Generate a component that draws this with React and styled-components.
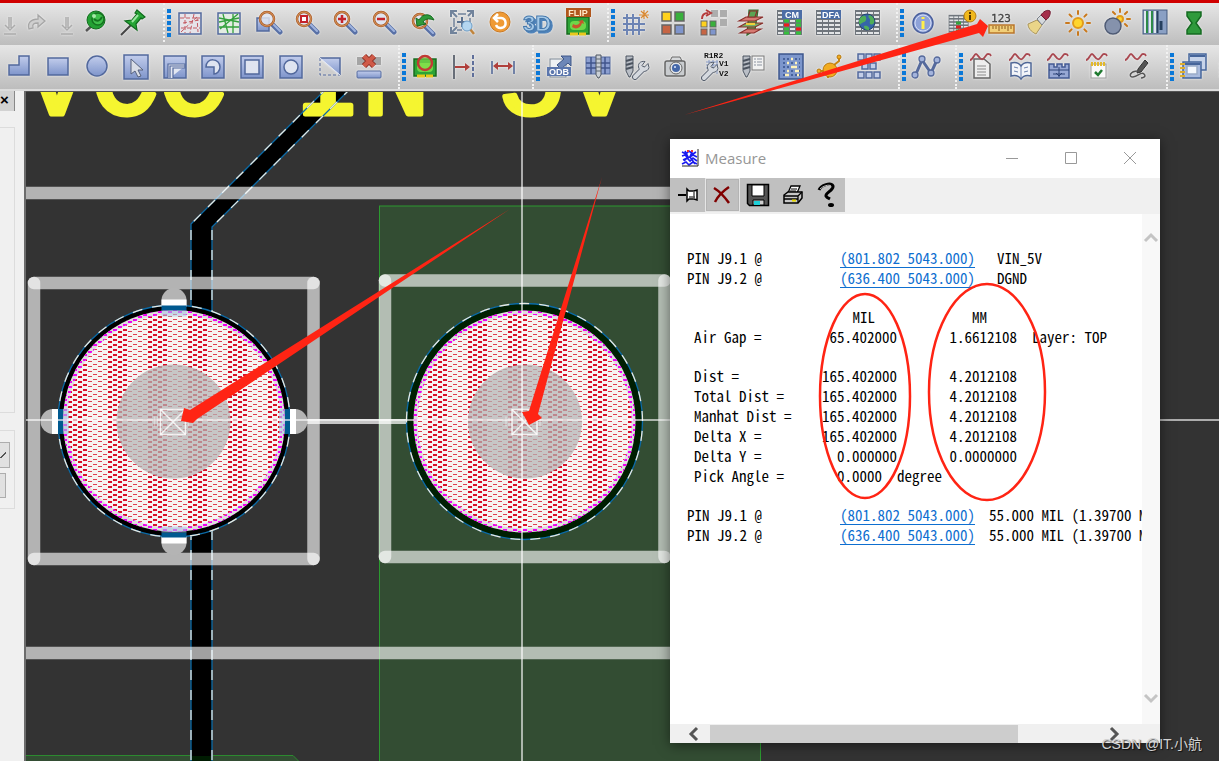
import React, { useState } from 'react';
import styled, { createGlobalStyle } from 'styled-components';

const GlobalStyle = createGlobalStyle`
  * { box-sizing: border-box; }
  html, body { margin: 0; height: 100%; }
  #root { height: 100%; }
  body {
    font-family: "Open Sans", "Noto Sans CJK SC", sans-serif;
    overflow: hidden;
    background: #333;
  }
  button { font: inherit; padding: 0; border: 0; background: none; }
`;

/* ---------- shell ---------- */

const Shell = styled.div`
  position: relative;
  display: flex;
  flex-direction: column;
  min-height: 100vh;
  height: 100%;
  border-top: 3px solid #d00000;
`;
const Toolbar = styled.div`
  display: flex;
  flex: none;
  height: ${p => p.$height}px;
  padding-bottom: ${p => p.$bottom || 0}px;
  overflow: hidden;
  background: linear-gradient(#e6e6e6, #bdbdbd);
`;
const Group = styled.div`
  display: flex;
  flex: none;
  align-items: center;
  width: ${p => p.$width}px;
  padding-right: 10px;
  height: 100%;
`;
const Divider = styled.span`
  flex: none;
  width: 8px;
  height: 100%;
  display: flex;
  align-items: center;
  border-left: 2px dotted #f2f2f2;
`;
const Grip = styled.span`
  width: 4px;
  height: 28px;
  margin-left: auto;
  background: repeating-linear-gradient(#0a78d8 0 4px, transparent 4px 6px);
`;
const ToolButton = styled.button`
  display: flex;
  justify-content: center;
  align-items: center;
  flex: ${p => (p.$width ? `0 0 ${p.$width}px` : '1 1 0')};
  min-width: 0;
  height: 34px;
`;
const Glyph = styled.svg`
  flex: none;
  width: 28px;
  height: 28px;
  overflow: visible;
  filter: drop-shadow(0 0 1px #f4f4f4);
`;
const Workspace = styled.div`
  display: flex;
  flex: 1;
  min-height: 0;
  border-top: 2px solid #dcdcdc;
`;
const SidePanel = styled.aside`
  flex: none;
  width: 26px;
  display: flex;
  flex-direction: column;
  background: #f0f0f0;
  border-right: 2px solid #6c6c6c;
  overflow: hidden;
`;
const PanelClose = styled.button`
  width: 15px;
  height: 20px;
  padding-bottom: 3px;
  color: #000;
  font: bold 15px/15px "Liberation Sans", sans-serif;
  text-align: left;
  background: #d2d2d2;
  border-right: 1px solid #888;
`;
const PanelBox = styled.div`
  width: 15px;
  height: ${p => p.$height}px;
  margin-top: ${p => p.$top}px;
  padding-top: 11px;
  border: 1px solid #dcdcdc;
  border-left: 0;
`;
const PanelSelect = styled.select`
  display: block;
  appearance: none;
  width: 10px;
  height: 26px;
  padding: 0;
  border: 1px solid #adadad;
  border-left: 0;
  border-radius: 0;
  background: linear-gradient(135deg, transparent 46%, #555 46% 62%, transparent 62%) 0 9px / 6px 6px no-repeat #e1e1e1;
`;
const PanelButton = styled.button`
  display: block;
  width: 6px;
  height: 25px;
  margin-top: 5px;
  border: 1px solid #adadad;
  border-left: 0;
  background: #e1e1e1;
`;
const Board = styled.svg`
  flex: 1;
  min-width: 0;
  height: 100%;
  border-top: 1px solid #555;
  background: #333;
`;

/* ---------- icons ---------- */

const EDGE = '#52689c';
const Blue = 'url(#tbBlue)';

const Lens = ({ x = 11, y = 10, children }) => (
  <g>
    <path d={`M${x + 6} ${y + 6}l7 7`} stroke="#5870a6" strokeWidth="5" strokeLinecap="round" />
    <path d={`M${x + 6} ${y + 5}l7 7`} stroke="#9fb3de" strokeWidth="2" strokeLinecap="round" />
    <circle cx={x} cy={y} r="7" fill="#dde3f0" fillOpacity=".85" stroke="#a85a28" strokeWidth="2.5" />
    <circle cx={x} cy={y} r="7" fill="none" stroke="#e8a86a" strokeWidth=".8" />
    {children}
  </g>
);
const DownBar = () => (
  <g stroke="#ababab" fill="none" strokeWidth="1.5">
    <path d="M13 8v11M15 8v11M9 16l5 5 5-5M8 25h12" />
  </g>
);
const Pcb = ({ y = 4 }) => (
  <g>
    <rect x="3" y={y} width="22" height="17" fill="#2da436" stroke="#176a1e" strokeWidth="1.5" />
    <rect x="6" y={y + 4} width="16" height="9" rx="4" fill="#6ed648" />
    <path d={`M6 ${y + 17}h16`} stroke="#e8c81c" strokeWidth="3" strokeDasharray="8 1" />
  </g>
);
const Sheet = ({ head, label }) => (
  <g>
    <rect x="2" y="1" width="25" height="25" fill="#6f757c" />
    {[3, 7, 11, 15, 19, 23].map(y => [3, 9, 15, 21].map(x => (
      <rect key={`${x}-${y}`} x={x} y={y} width="5" height="2" fill="#e2e4e6" />
    )))}
    {head && <rect x="7" y="1" width="20" height="9" fill="#4c6da6" />}
    {label && (
      <text x="17" y="9" fontSize="9" fontWeight="bold" fill="#fff" textAnchor="middle" fontFamily="Liberation Sans, sans-serif">{label}</text>
    )}
  </g>
);
const Via = ({ x = 8 }) => (
  <g>
    <path d={`M${x - 3} 3h7v15l-3 6h-1l-3-6z`} fill="#b9bec6" stroke="#4b535f" />
    <path d={`M${x - 3} 8l7-2M${x - 3} 12l7-2M${x - 3} 16l7-2`} stroke="#4b535f" strokeWidth="2" />
  </g>
);
const Wrench = ({ x = 0, y = 0 }) => (
  <g transform={`translate(${x} ${y})`}>
    <path d="M11 23l8-8" stroke="#565f6d" strokeWidth="6" strokeLinecap="round" />
    <path d="M24 9.500l-4 4-2-2 3-4c-5-1-8 3-6 7 2 4 9 4 10-1z" fill="#d5d9df" stroke="#565f6d" />
    <path d="M11 23l8-8" stroke="#d5d9df" strokeWidth="4" strokeLinecap="round" />
  </g>
);
const RedWave = () => (
  <path d="M2 7c3 0 4-6 6-6s4 7 7 5 3-5 5-5 2 0 3 2" fill="none" stroke="#a94850" strokeWidth="1.800" />
);
const Sun = ({ x = 14, y = 14, r = 5 }) => (
  <g stroke="#c9781c" strokeWidth="2" strokeLinecap="round">
    {[0, 45, 90, 135, 180, 225, 270, 315].map(a => (
      <path key={a} d={`M${x} ${y - r - 4}v-3`} transform={`rotate(${a} ${x} ${y})`} />
    ))}
    <circle cx={x} cy={y} r={r} fill="#ffd52e" stroke="#e09a1c" />
  </g>
);
const BlueSquare = ({ children }) => (
  <g stroke={EDGE} strokeWidth="1.5">
    <rect x="3" y="3" width="22" height="22" fill={Blue} />
    {children}
  </g>
);

const icons = {
  down: <DownBar />,
  redo: <path d="M6 20c-2-6 2-10 9-10V6l7 6-7 6v-4c-4 0-6 1-5 5z" transform="translate(-1 0)" fill="#cfcfcf" stroke="#a6a6a6" strokeWidth="1.300" />,
  ball: (
    <g>
      <path d="M4 22l10-9" stroke="#555" strokeWidth="2.500" />
      <circle cx="14" cy="11" r="9" fill="#23a033" stroke="#116a1c" />
      <circle cx="16" cy="10" r="6" fill="#3fc04b" stroke="#157320" strokeWidth="1.500" />
      <path d="M12 10c3 3 6 2 8-2" stroke="#157320" strokeWidth="2" fill="none" />
      <circle cx="12" cy="7" r="2" fill="#a7eaa8" />
    </g>
  ),
  pushpin: (
    <g>
      <path d="M1 26l10-10" stroke="#444" strokeWidth="2" />
      <path d="M17 1l8 7-3 2-1-1-5 6 1 6-12-9 7-1 5-6-2-1z" fill="#26a636" stroke="#0f6a1c" strokeWidth="1.200" />
      <path d="M12 13l6-7" stroke="#9be6a0" strokeWidth="2" />
    </g>
  ),
  ratsRed: (
    <g>
      <rect x="3" y="4" width="22" height="21" fill="#e6e4ea" stroke={EDGE} strokeWidth="1.500" />
      <path d="M4 9h20M7 14l16-3M5 19h19M9 5v19M18 5l-4 19M21 8l1 15M5 23l17-16" stroke="#c45a62" strokeDasharray="4 2" />
    </g>
  ),
  ratsGreen: (
    <g>
      <rect x="3" y="4" width="22" height="21" fill="#e3ece3" stroke={EDGE} strokeWidth="1.500" />
      <path d="M4 9l20 4M4 18h20M8 5l5 19M18 5v19M23 5L5 20M4 13l20-4" stroke="#33a03c" strokeWidth="1.300" fill="none" />
    </g>
  ),
  zoomRect: (
    <g>
      <rect x="3" y="9" width="12" height="13" fill={Blue} stroke={EDGE} strokeWidth="1.500" />
      <Lens x={13} y={10} />
    </g>
  ),
  zoomFit: <Lens><rect x="8" y="7" width="6" height="6" fill="#fff" stroke="#c4232b" strokeWidth="2" /></Lens>,
  zoomIn: <Lens><path d="M11 6v8M7 10h8" stroke="#c4232b" strokeWidth="2.500" /></Lens>,
  zoomOut: <Lens><path d="M7 10h8" stroke="#c4232b" strokeWidth="2.500" /></Lens>,
  zoomPrev: (
    <Lens x={11} y={12}>
      <path d="M8 17l-1-8 3 2c4-7 12-7 15 0-6-2-9-1-11 2l3 2z" fill="#2f9a3a" stroke="#166a20" />
    </Lens>
  ),
  zoomCenter: (
    <g fill="none">
      <path d="M3 8V2h6M19 2h6v6M3 18v6h6M4 3l5 5M24 3l-4 4M4 23l5-5" stroke="#71839b" strokeWidth="2" />
      <path d="M10 5h8M6 9v9M9 21h5M22 9v4" stroke="#71839b" strokeWidth="1.500" />
      <path d="M14 8v10M9 13h10" stroke="#5b718f" strokeWidth="2" />
      <path d="M22 20l4 5" stroke="#c0843c" strokeWidth="2.500" />
      <circle cx="19" cy="17" r="5" fill="#b4d6f0" stroke="#6b9cc6" />
    </g>
  ),
  repaint: (
    <g>
      <circle cx="14" cy="13" r="10" fill="#ef9a35" stroke="#c97822" />
      <path d="M9 9h6a5 5 0 1 1-5 7M12 5l-4 4 4 4" fill="none" stroke="#fff" strokeWidth="2.500" />
    </g>
  ),
  three: (
    <text x="12" y="22" fontFamily="Liberation Sans, sans-serif" fontWeight="bold" fontSize="22" textAnchor="middle" fill="#a3c8e8" stroke="#4577aa" filter="url(#extrude)">3D</text>
  ),
  flip: (
    <g>
      <Pcb y={8} />
      <path d="M8 18c4 3 9 1 10-4l2 1-1-4-5 1 2 1c-1 3-4 4-7 2z" fill="#c8542c" />
      <rect x="2" y="-1" width="25" height="9" fill="#b0561c" />
      <text x="14" y="7" fontSize="9" fontWeight="bold" fill="#ffe9c8" textAnchor="middle" fontFamily="Liberation Sans, sans-serif">FLIP</text>
    </g>
  ),
  gridStar: (
    <g>
      <path d="M7 5v21M13 5v21M19 9v17M3 9h17M3 15h22M3 21h22" stroke="#6d84b4" strokeWidth="2" />
      <path d="M24 1v9M19 6h10M21 2l7 7M28 2l-7 7" stroke="#d98a34" strokeWidth="1.200" />
    </g>
  ),
  tiles: (
    <g stroke="#666" strokeWidth="1.500">
      <rect x="3" y="3" width="9" height="9" fill="#ffd21e" />
      <rect x="16" y="3" width="9" height="9" fill="#39b03c" />
      <rect x="3" y="16" width="9" height="9" fill="#c76544" />
      <rect x="16" y="16" width="9" height="9" fill="#7f95cc" />
    </g>
  ),
  tilesMove: (
    <g>
      <g fill="#adadad"><rect x="13" y="1" width="7" height="7" /><rect x="22" y="1" width="7" height="7" /><rect x="22" y="10" width="7" height="7" /></g>
      <g stroke="#666">
        <rect x="3" y="12" width="6" height="6" fill="#ffd21e" />
        <rect x="12" y="12" width="6" height="6" fill="#39b03c" />
        <rect x="3" y="20" width="6" height="6" fill="#c76544" />
        <rect x="12" y="20" width="6" height="6" fill="#7f95cc" />
      </g>
      <path d="M4 10c0-4 2-6 6-6M8 1l5 3-5 3" stroke="#b53c3c" strokeWidth="2" fill="none" />
    </g>
  ),
  layers: (
    <g strokeWidth="1.200">
      <path d="M12 1h9l-3 20-8 5z" fill="#5ba554" stroke="#2e6b2c" />
      <path d="M3 24h14l7-4H10z" fill="#d77a72" stroke="#8a2f2c" />
      <path d="M2 18h16l8-4H9z" fill="#74b06a" stroke="#8a2f2c" />
      <path d="M2 12h16l8-4H9z" fill="#d77a72" stroke="#8a2f2c" />
      <path d="M13 2h7l-2 6h-7z" fill="#5ba554" stroke="#8a2f2c" />
      <path d="M9 15h9" stroke="#f0d03a" strokeWidth="2" />
    </g>
  ),
  cm: (
    <g>
      <Sheet head label="CM" />
      <path d="M9 12h5M21 12h5M9 24h5M21 24h5M21 16h5M9 20h5" stroke="#35c03c" strokeWidth="3" />
      <path d="M9 16h5M21 20h5" stroke="#ee1c1c" strokeWidth="3" />
    </g>
  ),
  dfa: <Sheet head label="DFA" />,
  globe: (
    <g>
      <Sheet />
      <circle cx="14" cy="13" r="8" fill="#3565a8" stroke="#24446f" />
      <path d="M8 8c4-3 6 0 5 3s-5 2-6 5c-2-3-1-6 1-8zM16 6c4 1 6 4 5 8-3 3-5 1-4-2s-3-3-1-6zM11 17c3-1 6 1 5 4-3 0-5-1-5-4z" fill="#4fae58" />
    </g>
  ),
  info: (
    <g>
      <circle cx="14" cy="14" r="10" fill="#8ea2d8" stroke="#4a5f9c" strokeWidth="1.500" />
      <circle cx="14" cy="14" r="8" fill="none" stroke="#d5def5" />
      <path d="M14 8v2M14 12v8" stroke="#fff04a" strokeWidth="3" />
    </g>
  ),
  sheetInfo: (
    <g>
      <g transform="translate(-1 5) scale(.8)"><Sheet /></g>
      <path d="M8 14h5M8 22h5" stroke="#35a03c" strokeWidth="3" />
      <path d="M8 18h5" stroke="#d22" strokeWidth="3" />
      <circle cx="22" cy="7" r="6" fill="#f0b81c" stroke="#b07a10" />
      <path d="M22 3v2M22 6v5" stroke="#5a3c00" strokeWidth="2" />
    </g>
  ),
  ruler: (
    <g>
      <text x="14" y="13" fontSize="11" fill="#444" stroke="#444" strokeWidth=".3" textAnchor="middle" fontFamily="DejaVu Sans Mono, monospace">123</text>
      <rect x="2" y="16" width="25" height="8" fill="#f2cf78" stroke="#b8742a" strokeWidth="1.500" />
      <path d="M6 17v3M9 17v3M12 17v5M15 17v3M18 17v3M21 17v5M24 17v3" stroke="#8b5a1e" />
    </g>
  ),
  brush: (
    <g>
      <path d="M3 15l9-4 5 5-6 9c-2-1-8-4-8-10z" fill="#ead588" stroke="#a8935a" />
      <path d="M12 10l4-4 5 5-4 5z" fill="#d5d9dd" stroke="#7a7f88" />
      <path d="M16 6c2-3 6-6 9-4 1 3-1 7-4 9z" fill="#a52f4c" stroke="#6f1c32" />
    </g>
  ),
  sun: <Sun />,
  dim: (
    <g>
      <Sun x={18} y={10} r={3} />
      <circle cx="11" cy="17" r="8" fill="#8592ac" stroke="#4f5b74" strokeWidth="1.500" />
    </g>
  ),
  stripes: (
    <g>
      <rect x="2" y="1" width="24" height="24" fill="#8aa0c4" stroke="#42597c" />
      <path d="M4 2v22M9 2v22M14 2v22" stroke="#dfe7ee" strokeWidth="2" />
      <path d="M6 2v22M11 2v22" stroke="#2d8a48" strokeWidth="2" />
      <path d="M16.500 2v22" stroke="#26405f" strokeWidth="2" />
      <path d="M20 12v9" stroke="#26405f" strokeWidth="3" />
    </g>
  ),
  hourglass: <path d="M7 3h14v4l-5 7 5 7v4H7v-4l5-7-5-7z" fill="#2f9a3c" stroke="#146a20" strokeWidth="1.500" />,

  polygon: <path d="M4 12h10V3h10v19H4z" fill={Blue} stroke={EDGE} strokeWidth="1.500" />,
  rect: <rect x="4" y="5" width="20" height="17" fill={Blue} stroke={EDGE} strokeWidth="1.500" />,
  circle: <circle cx="14" cy="13" r="10" fill={Blue} stroke={EDGE} strokeWidth="1.500" />,
  select: (
    <g>
      <rect x="2" y="2" width="24" height="24" fill={Blue} stroke={EDGE} strokeWidth="1.500" />
      <path d="M9 6v15l4-3 3 6 3-1-3-6h5z" fill="#d9dde6" stroke="#56617c" />
    </g>
  ),
  corner: <BlueSquare><path d="M7 25V11h17v4H12v10M9 25V13h15" fill="#e3e7f2" strokeWidth="1.200" /></BlueSquare>,
  voidPoly: <BlueSquare><path d="M7 14c0-10 14-9 14 0 0 4-3 7-6 7v-7z" fill="#dfe4f0" /></BlueSquare>,
  voidRect: <BlueSquare><rect x="7" y="7" width="14" height="14" fill="#dfe4f0" /></BlueSquare>,
  voidCircle: <BlueSquare><circle cx="14" cy="14" r="7" fill="#dfe4f0" /></BlueSquare>,
  trim: (
    <g>
      <path d="M4 5h20v17z" fill={Blue} />
      <path d="M4 5h20v17" fill="none" stroke={EDGE} strokeWidth="1.500" />
      <path d="M4 5v17h20" fill="none" stroke={EDGE} strokeDasharray="3 2" />
      <path d="M4 5l20 17" stroke="#e4e9f5" />
    </g>
  ),
  remove: (
    <g>
      <rect x="2" y="4" width="24" height="8" fill="#a4a4a4" />
      <path d="M9 3l10 10M19 3L9 13" stroke="#8c2f24" strokeWidth="6" />
      <path d="M9 3l10 10M19 3L9 13" stroke="#cf5a48" strokeWidth="4" />
      <rect x="2" y="18" width="24" height="7" rx="1" fill={Blue} stroke={EDGE} />
    </g>
  ),
  probe: (
    <g>
      <Pcb y={6} />
      <circle cx="14" cy="10" r="7" fill="#8be04c" fillOpacity=".6" stroke="#c13a34" strokeWidth="2.500" />
    </g>
  ),
  toEdge: (
    <g>
      <path d="M4 2v24" stroke="#686e78" strokeWidth="2" />
      <path d="M23 2v24" stroke="#5f6f9a" strokeWidth="2" strokeDasharray="4 2" />
      <path d="M5 14h12" stroke="#b0403c" strokeWidth="2" /><path d="M15 10l5 4-5 4z" fill="#b0403c" />
    </g>
  ),
  span: (
    <g>
      <path d="M3 8v13M25 8v13" stroke="#7181a6" strokeWidth="2" />
      <path d="M6 13h16" stroke="#b0403c" strokeWidth="2" /><path d="M4 13l5-4v8zM24 13l-5-4v8z" fill="#b0403c" />
    </g>
  ),
  odb: (
    <g>
      <rect x="5" y="6" width="16" height="18" fill="#eef1f4" stroke="#7d8794" />
      <path d="M12 12l7-6-3-3h10v10l-3-3-7 6z" fill="#6d87b8" stroke="#3c5585" />
      <rect x="2" y="14" width="24" height="9" fill="#5b76ad" />
      <text x="14" y="22" fontSize="9" fontWeight="bold" fill="#fff" textAnchor="middle" fontFamily="Liberation Sans, sans-serif">ODB</text>
    </g>
  ),
  viaGrid: (
    <g>
      <rect x="2" y="4" width="24" height="17" fill="#8c9fd0" stroke={EDGE} />
      <path d="M2 10h24M2 15h24M7 4v17M21 4v17" stroke="#40568c" strokeWidth="1.500" />
      <path d="M12 2h5v20l-2 3h-1l-2-3z" fill="#cbd0d6" stroke="#4b535f" />
      <path d="M12 6h5M12 10h5M12 14h5M12 18h5" stroke="#5d6673" />
    </g>
  ),
  viaTool: <g><Via x={6} /><Wrench x={1} y={1} /></g>,
  camera: (
    <g>
      <path d="M9 8l2-4h8l2 4z" fill="#d6d8da" stroke="#666" />
      <rect x="4" y="8" width="20" height="15" rx="2" fill="#c9cccf" stroke="#666" strokeWidth="1.500" />
      <circle cx="15" cy="15" r="6" fill="#e4e6e8" stroke="#666" />
      <circle cx="15" cy="15" r="4" fill="#4568a8" /><circle cx="14" cy="14" r="1" fill="#dfe9ff" />
    </g>
  ),
  rename: (
    <g>
      <path d="M6 9h12M6 12h12M6 15h12M9 7v10M13 7v10M17 7v14" stroke="#8598c4" />
      <Wrench x={-7} y={2} />
      <g fontFamily="Liberation Mono, monospace" fontWeight="bold" fontSize="8" fill="#111">
        <text x="4" y="5">R1R2</text><text x="19" y="13">V1</text><text x="19" y="23">V2</text>
      </g>
    </g>
  ),
  viaDoc: (
    <g>
      <Via x={7} />
      <rect x="13" y="3" width="12" height="14" fill="#f2f2f2" stroke="#777" />
      <path d="M15 6h8M15 9h8M15 12h8" stroke="#8b93a0" strokeDasharray="2 1 6 0" />
    </g>
  ),
  matrix: (
    <g>
      <rect x="2" y="1" width="24" height="25" fill="#7c96cc" stroke="#3d568c" strokeWidth="1.500" />
      <path d="M6 6h17M6 10h17M6 14h17M6 18h17M6 22h17" stroke="#46629c" strokeWidth="2" strokeDasharray="2 2" />
      <path d="M14 6h2M10 10h2M18 10h2M14 14h6M10 18h2M18 18h4M8 22h4M20 22h2" stroke="#fff3b8" strokeWidth="2.500" />
    </g>
  ),
  chip: (
    <g>
      <path d="M3 18h8M18 12l5-4V5M12 22v3" stroke="#c98612" strokeWidth="2" fill="none" />
      <circle cx="14" cy="17" r="7" fill="#f2ac20" stroke="#b5770c" />
      <circle cx="3" cy="18" r="2" fill="#f2ac20" stroke="#b5770c" /><circle cx="23" cy="4" r="2" fill="#f2ac20" stroke="#b5770c" />
    </g>
  ),
  array: (
    <g fill="#c3cee8" stroke={EDGE} strokeWidth="1.500">
      {[[3, 1], [11, 1], [19, 1], [7, 10], [15, 10], [3, 19], [11, 19], [19, 19]].map(([x, y]) => (
        <rect key={`${x}-${y}`} x={x} y={y} width="6" height="6" />
      ))}
    </g>
  ),
  route: (
    <g stroke="#566a9c" strokeWidth="1.300">
      <path d="M4 21l6-14 9 13 6-13" fill="none" strokeWidth="3" />
      {[[3, 22], [10, 6], [19, 20], [25, 7]].map(([x, y]) => <circle key={x} cx={x} cy={y} r="3" fill="#a4b4dc" />)}
    </g>
  ),
  waveDoc: <g><path d="M6 6h10l6 5v14H6z" fill="#eee" stroke="#666" strokeWidth="1.500" /><path d="M9 13h9M9 16h9M9 19h9M9 22h9" stroke="#8a8a8a" /><RedWave /></g>,
  waveBook: <g><path d="M4 10c4-1 8 0 10 3 2-3 6-4 10-3v13c-4-1-8 0-10 3-2-3-6-4-10-3z" fill="#f3f5f9" stroke="#4f6796" strokeWidth="1.500" /><path d="M14 13v12M7 14l4 1M7 18l4 1M17 15l4-1M17 19l4-1" stroke="#6c82ad" /><RedWave /></g>,
  waveChip: <g><path d="M4 11h5v3h3v-3h5v3h3v-3h4v14H4z" fill="#97a8d4" stroke="#435a92" strokeWidth="1.500" /><path d="M4 17h20M8 21h12M14 14v10M11 20l3 3 3-3" stroke="#2f4578" /><RedWave /></g>,
  waveNote: <g><rect x="7" y="11" width="15" height="14" fill="#fafafa" stroke="#9a9a9a" /><path d="M7 11h15" stroke="#e3b92c" strokeWidth="4" strokeDasharray="2 1" /><path d="M11 19l3 3 4-5" stroke="#1f7a30" strokeWidth="2.500" fill="none" /><RedWave /></g>,
  wavePen: <g><path d="M22 7l3 3-7 9-4 1 1-4z" fill="#555" stroke="#333" /><path d="M15 18c-8 0-10 6-5 6s8-6 11-3-2 4-3 4" stroke="#555" fill="none" strokeWidth="1.500" /><RedWave /></g>,
  copies: (
    <g strokeWidth="1.500" stroke="#46659a">
      <rect x="10" y="1" width="17" height="16" fill="#c7d4ea" />
      <path d="M11 3h15" strokeWidth="2" />
      <rect x="4" y="9" width="18" height="16" fill="#a9bbde" />
      <path d="M5 11h16" strokeWidth="2" /><rect x="8" y="13" width="10" height="8" fill="#f5f8fc" stroke="#9aacc8" />
      <path d="M1 11h5M1 15h5M1 19h5M1 23h5" stroke="#dfae2c" strokeWidth="2" />
    </g>
  ),
};

const topGroups = [
  { width: 163, bare: true, items: [['down', 20], ['redo', 36], ['down', 22], ['ball', 36], ['pushpin', 40]] },
  { width: 444, items: ['ratsRed', 'ratsGreen', 'zoomRect', 'zoomFit', 'zoomIn', 'zoomOut', 'zoomPrev', 'zoomCenter', 'repaint', 'three', 'flip'] },
  { width: 289, items: ['gridStar', 'tiles', 'tilesMove', 'layers', 'cm', 'dfa', 'globe'] },
  { width: 327, items: ['info', 'sheetInfo', 'ruler', 'brush', 'sun', 'dim', 'stripes', 'hourglass'] },
];
const bottomGroups = [
  { width: 398, bare: true, items: ['polygon', 'rect', 'circle', 'select', 'corner', 'voidPoly', 'voidRect', 'voidCircle', 'trim', 'remove'] },
  { width: 134, items: ['probe', 'toEdge', 'span'] },
  { width: 366, items: ['odb', 'viaGrid', 'viaTool', 'camera', 'rename', 'viaDoc', 'matrix', 'chip', 'array'] },
  { width: 57, items: ['route'] },
  { width: 211, items: ['waveDoc', 'waveBook', 'waveChip', 'waveNote', 'wavePen'] },
  { width: 95, items: ['copies', 'copies'] },
];

const ToolRow = ({ groups, height, bottom }) => (
  <Toolbar role="toolbar" $height={height} $bottom={bottom}>
    {groups.map((g, i) => (
      <Group key={i} $width={g.width}>
        {!g.bare && <Divider><Grip /></Divider>}
        {g.items.map((item, j) => {
          const [name, width] = Array.isArray(item) ? item : [item];
          return (
            <ToolButton key={j} $width={width} aria-label={name}>
              <Glyph viewBox="0 0 28 28" fill="none">{icons[name]}</Glyph>
            </ToolButton>
          );
        })}
      </Group>
    ))}
  </Toolbar>
);

/* ---------- board ---------- */

const SILK = { stroke: '#fff', strokeOpacity: 0.63, strokeWidth: 12.5, strokeLinecap: 'round' };

const Frame = ({ l, t, r, b }) => (
  <g {...SILK}>
    <path d={`M${l} ${t}H${r}`} /><path d={`M${l} ${b}H${r}`} />
    <path d={`M${l} ${t}V${b}`} /><path d={`M${r} ${t}V${b}`} />
  </g>
);
const Dashed = ({ d }) => (
  <g fill="none" strokeWidth="1.3">
    <path d={d} stroke="#0b6aa6" />
    <path d={d} stroke="#e8e8e0" strokeDasharray="10 10" />
  </g>
);
const ringPath = (x, y, r) => `M${x - r} ${y}a${r} ${r} 0 1 1 ${2 * r} 0a${r} ${r} 0 1 1 ${-2 * r} 0`;

const Pad = ({ x, y, outer, ring }) => (
  <g>
    <circle cx={x} cy={y} r={outer} fill={ring} />
    <Dashed d={ringPath(x, y, outer)} />
    <circle cx={x} cy={y} r="111" fill="#dedede" />
    <circle cx={x} cy={y} r="107" fill="#f6f4f2" />
    <circle cx={x} cy={y} r="107" fill="url(#hatchRed)" />
    <circle cx={x} cy={y} r="109" fill="none" stroke="url(#hatchPink)" strokeWidth="4" />
  </g>
);
const Drill = ({ x, y }) => (
  <g>
    <circle cx={x} cy={y} r="57" fill="#b4b4b4" fillOpacity=".72" />
    <g stroke="#fff" strokeOpacity=".8" strokeWidth="1.5" fill="none">
      <rect x={x - 13} y={y - 12} width="25" height="25" />
      <path d={`M${x - 13} ${y - 12}l25 25M${x + 12} ${y - 12}l-25 25`} />
      <path d={`M${x - 19} ${y - 5}v10M${x - 16} ${y - 5}v10M${x + 15} ${y - 5}v10`} strokeOpacity=".35" />
    </g>
  </g>
);
const Spoke = ({ x, y, angle }) => (
  <g transform={`translate(${x} ${y}) rotate(${angle})`}>
    <path d="M-12.500 -115V-121a12.500 12.500 0 0 1 25 0V-115z" fill="#b4b4b4" />
    <rect x="-12.5" y="-122" width="25" height="7" fill="#fff" />
    <rect x="-12.5" y="-116" width="25" height="5" fill="#00598f" />
    <rect x="-12.5" y="-111" width="25" height="6" fill="#a9cbe6" fillOpacity=".55" />
  </g>
);

/* drawing units are window pixels, shifted by the toolbars and the side panel */
const BoardView = () => (
  <Board aria-label="board">
    <g transform="translate(-26 -92)">
      <rect x="379.5" y="206" width="381" height="600" fill="#334d33" stroke="#2c9a30" />
      <path d="M20 755.500H293l12 12V800H20z" fill="#334d33" stroke="#2c8a30" />
      <path d="M191 800V224L330 85H354L212 227V800z" fill="#000" />
      <path d="M191 756h21v50h-21z" fill="#001c02" />
      <text x="23" y="114" fontFamily="Liberation Mono, monospace" fontSize="113" fill="#f5f530" stroke="#f5f530" strokeWidth="5" strokeLinejoin="round">VCC IN 5V</text>
      <Dashed d="M191 800V224L330 85" />
      <Dashed d="M212 800V227L354 85" />
      <path d="M10 193H760M10 653H760" {...SILK} />
      <Frame l={34} t={283} r={313.500} b={559} />
      <Frame l={385} t={280.500} r={664.500} b={557} />
      <path d="M290 421.500H417" stroke="#fff" strokeOpacity=".72" strokeWidth="5" />
      <Pad x={174} y={421} outer={116} ring="#000" />
      <Pad x={524.500} y={421.500} outer={118} ring="#001f02" />
      {[0, 90, 180, 270].map(a => <Spoke key={a} x={174} y={421.500} angle={a} />)}
      <Drill x={173.500} y={421.500} />
      <Drill x={525} y={421.500} />
      <path d="M26 420H3000M522 92V2000" stroke="#fff" strokeOpacity=".8" strokeWidth="1.5" />
    </g>
  </Board>
);

/* ---------- measure window ---------- */

const Window = styled.section`
  position: absolute;
  left: 670px;
  top: 136px;
  width: 490px;
  display: flex;
  flex-direction: column;
  background: #fff;
  box-shadow: 0 2px 12px rgba(0, 0, 0, 0.5);
`;
const TitleBar = styled.header`
  display: flex;
  align-items: center;
  height: 39px;
  padding: 0 1px 2px 11px;
`;
const TitleIcon = styled.svg`
  width: 18px;
  height: 18px;
`;
const Title = styled.h1`
  flex: 1;
  margin: 0 0 0 6px;
  color: #969696;
  font-size: 15px;
  font-weight: 400;
`;
const WindowButton = styled.button`
  width: 59px;
  height: 37px;
  display: flex;
  align-items: center;
  justify-content: center;
`;
const WindowTools = styled.div`
  display: flex;
  height: 36px;
  padding-bottom: 2px;
  background: #f0f0f0;
`;
const WindowTool = styled.button`
  width: 35px;
  display: flex;
  align-items: center;
  justify-content: center;
  background: #c0c0c0;
  border: ${p => (p.$raised ? '2px solid #e6e6e6' : '0')};
  outline: ${p => (p.$raised ? '1px solid #b4b4b4' : '0')};
  outline-offset: -2px;
`;
const Content = styled.div`
  display: flex;
  height: 510px;
`;
const Report = styled.div`
  flex: 1;
  min-width: 0;
  overflow: hidden;
  padding: 34px 0 0 17px;
  color: #000;
  font-family: "Noto Sans Mono CJK SC", "Liberation Mono", monospace;
  font-size: 15px;
  line-height: 20px;
  white-space: pre;
`;
const Table = styled.table`
  border-collapse: collapse;
  table-layout: fixed;
  width: 600px;
  margin-bottom: 19px;
  td, th { padding: 0; height: 20px; font-weight: 400; text-align: left; }
`;
const Col = styled.col`
  width: ${p => p.$width}px;
`;
const Label = styled.th`
  && { padding-left: 7px; }
`;
const Num = styled.td`
  && { text-align: right; }
`;
const Unit = styled.th`
  && { text-align: right; padding-right: ${p => p.$right}px; }
`;
const Note = styled.td`
  && { padding-left: ${p => p.$left || 0}px; }
`;
const Spacer = styled.tr`
  && td { height: 19px; }
`;
const Coord = styled.a`
  color: #0f6fd0;
  text-decoration: underline;
  text-underline-offset: 3px;
`;
const VScroll = styled.div`
  width: 18px;
  display: flex;
  flex-direction: column;
  justify-content: space-between;
  align-items: center;
  padding: 16px 0 18px;
  background: #f8f8f8;
`;
const HScroll = styled.div`
  display: flex;
  align-items: stretch;
  height: 19px;
  padding-left: 8px;
  background: #f0f0f0;
`;
const ScrollArrow = styled.button`
  width: ${p => p.$width || 18}px;
  display: flex;
  align-items: center;
  justify-content: center;
`;
const Thumb = styled.div`
  width: 308px;
  margin: 1px 87px 0 0;
  background: #cdcdcd;
`;

const Chevron = ({ angle, color }) => (
  <svg width="16" height="16" viewBox="0 0 16 16">
    <path d="M2 11l6-6 6 6" transform={`rotate(${angle} 8 8)`} fill="none" stroke={color} strokeWidth="3" />
  </svg>
);

const pins = [
  ['PIN J9.1 @', '(801.802 5043.000)', 'VIN_5V', '55.000 MIL (1.39700 MM)'],
  ['PIN J9.2 @', '(636.400 5043.000)', 'DGND', '55.000 MIL (1.39700 MM)'],
];
const distances = [
  ['Dist =', '165.402000', '4.2012108'],
  ['Total Dist =', '165.402000', '4.2012108'],
  ['Manhat Dist =', '165.402000', '4.2012108'],
  ['Delta X =', '165.402000', '4.2012108'],
  ['Delta Y =', '0.000000', '0.0000000'],
];

const PinTable = ({ field, gap }) => (
  <Table>
    <colgroup><Col $width={153} /><Col $width={gap} /><Col /></colgroup>
    <tbody>
      {pins.map(p => (
        <tr key={p[0]}>
          <td>{p[0]}</td>
          <td><Coord href="#pin">{p[1]}</Coord></td>
          <td>{p[field]}</td>
        </tr>
      ))}
    </tbody>
  </Table>
);

const MeasureWindow = ({ onClose }) => (
  <Window aria-label="Measure">
    <TitleBar>
      <TitleIcon viewBox="0 0 18 18">
        <rect x="1" y="1" width="16" height="16" fill="#fff" />
        <path d="M1 3l4 2 3-3 4 3 3-2M1 7l3-1 3 3 5-3 4 2M2 11l4-2 3 3 3-3 4 3M1 15l4-2 3 3 4-3 4 2M4 2l3 6-4 4M11 3l-2 5 5 7" fill="none" stroke="#1a1af0" strokeWidth="1.7" />
        <path d="M6 2h2M10 2h2" stroke="#e33" strokeWidth="2" />
        <path d="M17 0v17H1" fill="none" stroke="#222" />
      </TitleIcon>
      <Title>Measure</Title>
      <WindowButton aria-label="Minimize"><svg width="14" height="14"><path d="M1 7.500h12" stroke="#999" /></svg></WindowButton>
      <WindowButton aria-label="Maximize"><svg width="14" height="14"><path d="M1.500 1.500h11v11h-11z" fill="none" stroke="#999" /></svg></WindowButton>
      <WindowButton aria-label="Close" onClick={onClose}><svg width="14" height="14"><path d="M1 1l12 12M13 1L1 13" stroke="#999" /></svg></WindowButton>
    </TitleBar>
    <WindowTools>
      <WindowTool aria-label="Pin">
        <svg width="22" height="20">
          <path d="M1 10h8" stroke="#000" strokeWidth="2" />
          <path d="M10 4l2 2h5l3-1v10l-3-1h-5l-2 2z" fill="#fff" stroke="#000" strokeWidth="1.500" />
          <path d="M12 12h6M17 6v8" stroke="#555" strokeWidth="1.500" />
        </svg>
      </WindowTool>
      <WindowTool aria-label="Clear" $raised>
        <svg width="20" height="20"><path d="M1 3c5 3 10 8 15 15M16 2C10 6 5 11 2 17" stroke="#800000" strokeWidth="2.5" fill="none" /></svg>
      </WindowTool>
      <WindowTool aria-label="Save">
        <svg width="24" height="24">
          <path d="M1.500 1.500h21v21h-19l-2-2z" fill="#555" stroke="#000" strokeWidth="1.500" />
          <path d="M6 2h12v11H6z" fill="#fff" stroke="#000" />
          <path d="M7 17h11v5H7z" fill="#cfcfcf" stroke="#000" /><path d="M8 18h6v4H8z" fill="#1fd0d8" />
        </svg>
      </WindowTool>
      <WindowTool aria-label="Print">
        <svg width="22" height="22">
          <path d="M6 9L9 2h9l-3 7z" fill="#fff" stroke="#000" strokeWidth="1.300" />
          <path d="M9 5h6M8 7h6" stroke="#000" />
          <path d="M2 11l4-3h14v6l-4 5H2z" fill="#c8c8c8" stroke="#000" strokeWidth="1.500" />
          <path d="M2 12h14v7M16 12l4-4M2 15h14" stroke="#000" fill="none" strokeWidth="1.300" />
          <path d="M10 16.500h4" stroke="#e8d800" strokeWidth="2" />
        </svg>
      </WindowTool>
      <WindowTool aria-label="Help">
        <svg width="22" height="26">
          <path d="M2 8c2-5 12-8 14-4 1 4-8 7-7 10 1 2 2 2 4 3" stroke="#000" strokeWidth="3" fill="none" />
          <path d="M3 7c3-3 9-5 11-3" stroke="#bbb" fill="none" />
          <ellipse cx="14" cy="23" rx="3" ry="2" fill="#000" />
        </svg>
      </WindowTool>
    </WindowTools>
    <Content>
      <Report>
        <PinTable field={2} gap={157} />
        <Table>
          <colgroup><Col $width={128} /><Col $width={82} /><Col $width={120} /><Col /></colgroup>
          <tbody>
            <tr><td /><Unit $right={22}>MIL</Unit><Unit $right={30}>MM</Unit><td /></tr>
            <tr><Label>Air Gap =</Label><Num>65.402000</Num><Num>1.6612108</Num><Note $left={15}>Layer: TOP</Note></tr>
            <Spacer><td colSpan="4" /></Spacer>
            {distances.map(([name, mil, mm]) => (
              <tr key={name}><Label>{name}</Label><Num>{mil}</Num><Num>{mm}</Num><td /></tr>
            ))}
            <tr><Label>Pick Angle =</Label><Unit as="td" $right={15}>0.0000</Unit><Note>degree</Note><td /></tr>
          </tbody>
        </Table>
        <PinTable field={3} gap={149} />
      </Report>
      <VScroll>
        <ScrollArrow aria-label="Scroll up"><Chevron angle={0} color="#c4c4c4" /></ScrollArrow>
        <ScrollArrow aria-label="Scroll down"><Chevron angle={180} color="#c4c4c4" /></ScrollArrow>
      </VScroll>
    </Content>
    <HScroll>
      <ScrollArrow $width={32} aria-label="Scroll left"><Chevron angle={-90} color="#555" /></ScrollArrow>
      <Thumb />
      <ScrollArrow aria-label="Scroll right"><Chevron angle={90} color="#555" /></ScrollArrow>
    </HScroll>
  </Window>
);

/* ---------- annotations ---------- */

const Markup = styled.svg`
  position: absolute;
  left: 0;
  top: -3px;
  width: 100%;
  height: 100%;
  overflow: visible;
  pointer-events: none;
`;
const Watermark = styled.div`
  position: absolute;
  right: 17px;
  bottom: 6px;
  color: #d2d2d2;
  font: 14px/22px "Liberation Sans", "Noto Sans CJK SC", sans-serif;
  text-shadow: 1px 1px 1px rgba(0, 0, 0, 0.7);
`;
const Defs = styled.svg`
  position: absolute;
  width: 0;
  height: 0;
`;

const App = () => {
  const [open, setOpen] = useState(true);

  return (
    <>
      <GlobalStyle />
      <Shell>
        <Defs>
          <defs>
            <linearGradient id="tbBlue" x1="0" y1="0" x2="0" y2="1">
              <stop offset="0" stopColor="#c2cdec" /><stop offset="1" stopColor="#7f95cb" />
            </linearGradient>
            <filter id="extrude" x="-20%" y="-20%" width="150%" height="150%">
              <feDropShadow dx="2" dy="2" stdDeviation="0.5" floodColor="#4b80b8" />
            </filter>
            <pattern id="hatchRed" x="148" y="1" width="40" height="5" patternUnits="userSpaceOnUse">
              {[0, 5, 10, 15].map((x, i) => (
                <g key={x} fill="#d8102a">
                  <rect x={x} y={i % 2 ? 3 : 0} width="4" height="2" />
                  <rect x={x + 20} y={i % 2 ? 3 : 0} width="4" height="1" fillOpacity=".8" />
                </g>
              ))}
            </pattern>
            <pattern id="hatchPink" x="148" y="1" width="10" height="5" patternUnits="userSpaceOnUse">
              <rect width="4" height="2" fill="#f000f0" />
              <rect x="5" y="3" width="4" height="2" fill="#f000f0" />
            </pattern>
          </defs>
        </Defs>
        <ToolRow groups={topGroups} height={42} bottom={3} />
        <ToolRow groups={bottomGroups} height={44} />
        <Workspace>
          <SidePanel>
            <PanelClose aria-label="Close panel">×</PanelClose>
            <PanelBox $top={16} $height={286} />
            <PanelBox $top={17} $height={79}>
              <PanelSelect aria-label="Option" />
              <PanelButton aria-label="Apply" />
            </PanelBox>
          </SidePanel>
          <BoardView />
        </Workspace>
        {open && <MeasureWindow onClose={() => setOpen(false)} />}
        <Markup fill="#ff2414">
          <path d="M513 207L190 410l-6-2-3 13 12 2 4-4z" />
          <path d="M602 177L529 411l-7 1 7 13 13-7-4-4z" />
          <path d="M684 115L977 24l3-5 8 7-5 11-4-4z" />
          <ellipse cx="865" cy="396" rx="45" ry="102" fill="none" stroke="#ff2414" strokeWidth="2.5" />
          <ellipse cx="987" cy="392" rx="58" ry="108" fill="none" stroke="#ff2414" strokeWidth="2.5" />
        </Markup>
        <Watermark>CSDN @IT.小航</Watermark>
      </Shell>
    </>
  );
};

export default App;
